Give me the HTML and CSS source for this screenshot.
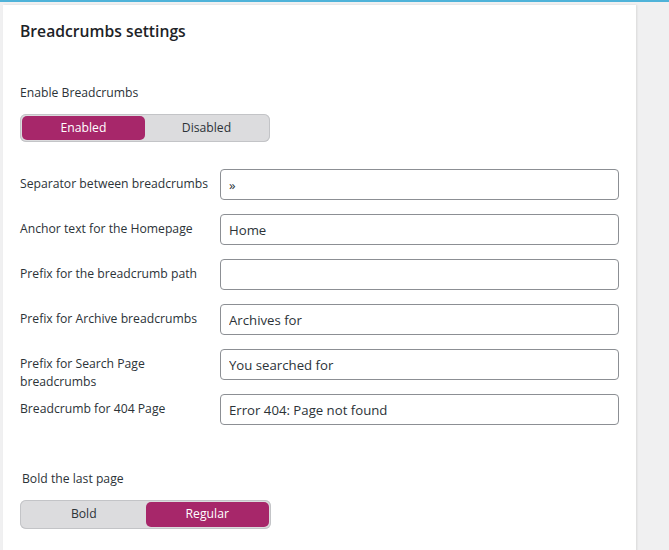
FILE: index.html
```html
<!DOCTYPE html>
<html lang="en">
<head>
    <meta charset="UTF-8">
    <title>Breadcrumbs settings</title>
    <meta name="viewport" content="width=device-width, initial-scale=1.0">
    <link rel="stylesheet" href="styles.css">
</head>
<body>
    <div class="topbar"></div>
    <div class="panel">
        <h2>Breadcrumbs settings</h2>

        <div class="field">
            <div class="field-label">Enable Breadcrumbs</div>
            <div class="toggle">
                <span class="opt active">Enabled</span>
                <span class="opt">Disabled</span>
            </div>
        </div>

        <div class="rows">
            <div class="row">
                <label>Separator between breadcrumbs</label>
                <input type="text" value="&raquo;">
            </div>
            <div class="row">
                <label>Anchor text for the Homepage</label>
                <input type="text" value="Home">
            </div>
            <div class="row">
                <label>Prefix for the breadcrumb path</label>
                <input type="text" value="">
            </div>
            <div class="row">
                <label>Prefix for Archive breadcrumbs</label>
                <input type="text" value="Archives for">
            </div>
            <div class="row">
                <label>Prefix for Search Page breadcrumbs</label>
                <input type="text" value="You searched for">
            </div>
            <div class="row">
                <label>Breadcrumb for 404 Page</label>
                <input type="text" value="Error 404: Page not found">
            </div>
        </div>

        <div class="field last">
            <div class="field-label">Bold the last page</div>
            <div class="toggle">
                <span class="opt">Bold</span>
                <span class="opt active">Regular</span>
            </div>
        </div>
    </div>
</body>
</html>
```

FILE: styles.css
```css
html, body { height: 100%; }
body { margin: 0; background: #f0f0f1; font-family: "Open Sans", "Noto Sans", sans-serif; font-size: 12.2px; color: #2c3338; overflow: hidden; }
.topbar { height: 2px; background: #4fb3d9; }
.panel { margin: 3px 0 0 3px; width: 633px; height: 560px; background: #fff; box-shadow: 1px 0 2px #0000001a; padding: 15px 17px 0; box-sizing: border-box; }
h2 { margin: 0 0 42px; font-size: 15.7px; font-weight: 600; color: #1d2327; line-height: 22px; }
.field-label { line-height: 18px; margin-bottom: 12px; }
.toggle { display: flex; width: 246px; height: 24px; padding: 2px; background: #dcdcde; border-radius: 6px; box-shadow: 0 0 0 1px #c3c4c7 inset; }
.opt { flex: 1; text-align: center; line-height: 24px; border-radius: 5px; color: #2c3338; }
.opt.active { background: #a7276a; color: #fff; }
.rows { margin-top: 27px; display: flex; flex-direction: column; gap: 14px; }
.row { display: flex; align-items: flex-start; height: 31px; }
.row label { width: 200px; flex: none; line-height: 18px; padding-top: 6px; }
.row input { width: 400px; height: 31px; box-sizing: border-box; border: 1px solid #8c8f94; border-radius: 4px; padding: 0 8px; font: inherit; font-size: 13.2px; color: #2c3338; }
.field.last { margin-top: 45px; }
.field.last .field-label { padding-left: 2px; }
.field.last .toggle { width: 247px; height: 25px; }
```
